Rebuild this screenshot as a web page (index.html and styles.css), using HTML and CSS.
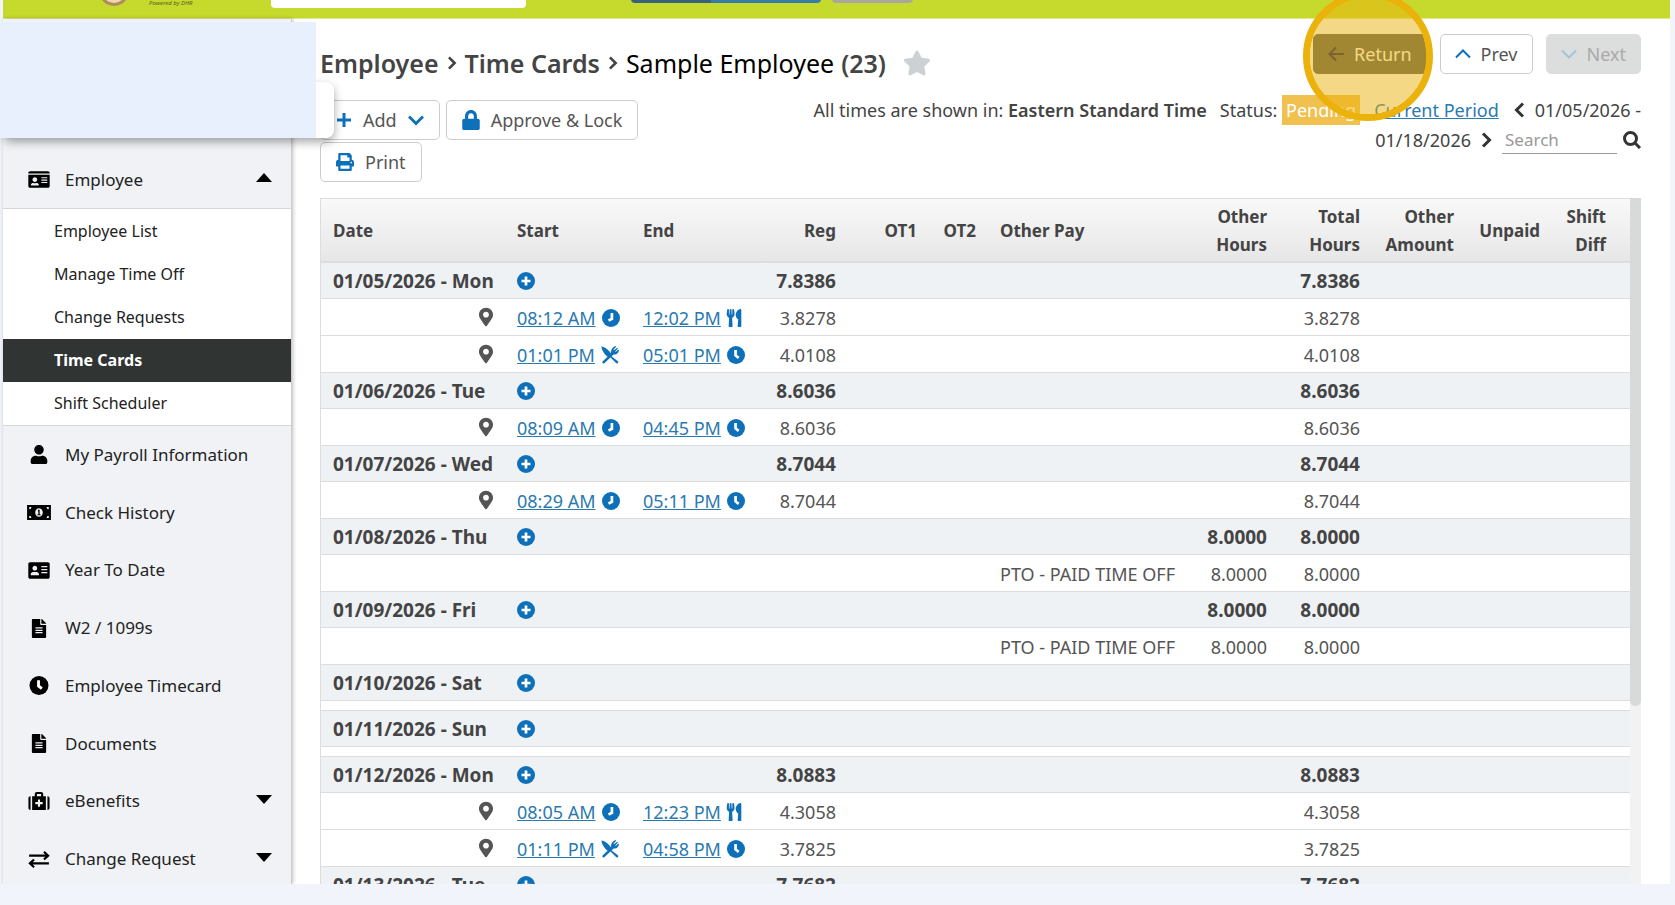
FILE: index.html
```html
<!DOCTYPE html>
<html lang="en">

<head>
  <meta charset="UTF-8">
  <meta name="viewport" content="width=device-width, initial-scale=1.0">
  <title>Time Cards</title>
  <link rel="stylesheet" href="styles.css">
</head>

<body>
  <!-- Icon set -->
  <svg class="sprite" aria-hidden="true">
    <symbol id="i-idcard" viewBox="0 0 576 512"><path d="M528 32H48C21.500 32 0 53.500 0 80v16h576V80c0-26.500-21.500-48-48-48zM0 432c0 26.500 21.500 48 48 48h480c26.500 0 48-21.500 48-48V128H0v304zm352-232c0-4 4-8 8-8h144c4 0 8 4 8 8v16c0 4-4 8-8 8H360c-4 0-8-4-8-8v-16zm0 64c0-4 4-8 8-8h144c4 0 8 4 8 8v16c0 4-4 8-8 8H360c-4 0-8-4-8-8v-16zm0 64c0-4 4-8 8-8h144c4 0 8 4 8 8v16c0 4-4 8-8 8H360c-4 0-8-4-8-8v-16zM176 192c35 0 64 29 64 64s-29 64-64 64-64-29-64-64 29-64 64-64zM67 396C75 370 100 352 128 352h8c12 5 26 8 40 8s28-3 40-8h8c28 0 52 18 61 44 3 10-5 20-16 20H83c-10 0-19-10-16-20z" /></symbol>
    <symbol id="i-card" viewBox="0 0 576 512"><path d="M528 32H48C21 32 0 53 0 80v352c0 27 21 48 48 48h480c27 0 48-21 48-48V80c0-27-21-48-48-48zM352 136h160v32H352zm0 80h160v32H352zm0 80h160v32H352zM176 128c35 0 64 29 64 64s-29 64-64 64-64-29-64-64 29-64 64-64zM64 362c0-37 30-66 66-66h92c36 0 66 29 66 66v22H64z" /></symbol>
    <symbol id="i-user" viewBox="0 0 448 512"><path d="M224 256c71 0 128-57 128-128S295 0 224 0 96 57 96 128s57 128 128 128zm90 32h-17c-22 10-47 16-73 16s-51-6-73-16h-17C60 288 0 348 0 422V464c0 27 21 48 48 48h352c27 0 48-21 48-48v-42c0-74-60-134-134-134z" /></symbol>
    <symbol id="i-money" viewBox="0 0 24 16"><path fill-rule="evenodd" d="M1 1h22v14H1zM3 3v2a2 2 0 0 0 2-2zm18 0h-2a2 2 0 0 0 2 2zM3 13h2a2 2 0 0 0-2-2zm18 0v-2a2 2 0 0 0-2 2zM12 4c-2 0-3.500 1.700-3.500 4S10 12 12 12s3.500-1.700 3.500-4S14 4 12 4zM11 5.500h1.600V9.500h.8v1h-2.800v-1h.8v-2.700H11z" /></symbol>
    <symbol id="i-file" viewBox="0 0 384 512"><path d="M224 136V0H24C11 0 0 11 0 24v464c0 13 11 24 24 24h336c13 0 24-11 24-24V160H248c-13 0-24-11-24-24zm64 248H96v-32h192zm0-64H96v-32h192zm0-64H96v-32h192zM384 122v6H256V0h6c6 0 13 2 17 7l98 98c4 4 7 11 7 17z" /></symbol>
    <symbol id="i-clock" viewBox="0 0 20 20"><circle cx="10" cy="10" r="10" /><path class="cut" d="M9.500 4.500V10.500L13 13.200" /></symbol>
    <symbol id="i-clock-in" viewBox="0 0 20 20"><circle cx="10" cy="10" r="10" /><path class="cut" d="M11 4.500V11L7.200 12.800" /></symbol>
    <symbol id="i-medkit" viewBox="0 0 20 18"><path fill-rule="evenodd" d="M2 4v13C.7 17 0 16.300 0 15V6c0-1.300.7-2 2-2zM18 4v13c1.300 0 2-.7 2-2V6c0-1.300-.7-2-2-2zM3.500 4H6V2c0-1.200.8-2 2-2h4c1.200 0 2 .8 2 2v2h2.500v13h-13zM8 2v2h4V2zM9 7v2.500H6.500v2H9V14h2v-2.500h2.500v-2H11V7z" /></symbol>
    <symbol id="i-swap" viewBox="0 0 20 16"><path class="line" d="M1 4.500h17M14.500 1l3.800 3.500-3.800 3.500M19 11.500H2M5.500 8L1.700 11.500 5.500 15" /></symbol>
    <symbol id="i-plus" viewBox="0 0 16 16"><path class="line" d="M8 1v14M1 8h14" /></symbol>
    <symbol id="i-left" viewBox="0 0 10 16"><path class="line" d="M8.500 1.500L2 8l6.500 6.500" /></symbol>
    <symbol id="i-right" viewBox="0 0 10 16"><path class="line" d="M1.500 1.500L8 8l-6.500 6.500" /></symbol>
    <symbol id="i-down" viewBox="0 0 16 10"><path class="line" d="M1 1.500L8 8.500l7-7" /></symbol>
    <symbol id="i-up" viewBox="0 0 16 10"><path class="line" d="M1 8.500L8 1.500l7 7" /></symbol>
    <symbol id="i-back" viewBox="0 0 16 16"><path class="line" d="M16 8H1.500M8 1.500L1.500 8 8 14.500" /></symbol>
    <symbol id="i-lock" viewBox="0 0 448 512"><path d="M400 224h-24v-72C376 68 308 0 224 0S72 68 72 152v72H48c-27 0-48 21-48 48v192c0 27 21 48 48 48h352c27 0 48-21 48-48V272c0-27-21-48-48-48zm-104 0H152v-72c0-40 32-72 72-72s72 32 72 72v72z" /></symbol>
    <symbol id="i-print" viewBox="0 0 512 512"><path d="M448 192V77c0-8-3-16-9-22L393 9c-6-6-14-9-22-9H96C78 0 64 14 64 32v160c-35 0-64 29-64 64v112c0 9 7 16 16 16h48v96c0 18 14 32 32 32h320c18 0 32-14 32-32v-96h48c9 0 16-7 16-16V256c0-35-29-64-64-64zm-64 256H128v-96h256v96zm0-224H128V64h192v48c0 9 7 16 16 16h48v96zm48 72c-13 0-24-11-24-24s11-24 24-24 24 11 24 24-11 24-24 24z" /></symbol>
    <symbol id="i-star" viewBox="0 0 576 512"><path d="M259 18L194 150 48 171c-26 4-37 36-18 55l106 103-25 145c-4 27 23 46 46 34l131-68 131 68c23 12 51-7 46-34l-25-145 106-103c19-19 8-51-18-55L382 150 317 18c-12-24-46-24-58 0z" /></symbol>
    <symbol id="i-search" viewBox="0 0 18 18"><circle class="line" cx="7.500" cy="7.500" r="6" /><path class="line" d="M12 12l5 5" /></symbol>
    <symbol id="i-add" viewBox="0 0 20 20"><circle cx="10" cy="10" r="10" /><path class="cut" d="M10 5v10M5 10h10" /></symbol>
    <symbol id="i-pin" viewBox="0 0 384 512"><path d="M172 502C27 291 0 269 0 192 0 86 86 0 192 0s192 86 192 192c0 77-27 99-172 310-10 13-30 13-40 0zM192 272c44 0 80-36 80-80s-36-80-80-80-80 36-80 80 36 80 80 80z" /></symbol>
    <symbol id="i-meal" viewBox="0 0 416 512"><path d="M208 15c1 5 16 95 16 129 0 52-28 90-69 105L168 487c1 13-10 25-24 25H80c-14 0-25-11-24-25l13-238C28 234 0 196 0 144 0 110 15 20 16 15 19-5 61-5 64 16v142c1 3 15 3 16 0 1-26 8-140 8-142 3-21 45-21 48 0 0 2 7 116 8 142 1 3 15 3 16 0V16c3-21 45-21 48-1zm119 286l-15 185c-1 14 10 26 24 26h56c13 0 24-11 24-24V24c0-13-11-24-24-24-82 0-221 178-65 301z" /></symbol>
    <symbol id="i-meal-end" viewBox="0 0 20 20"><path d="M.5.5C4 .5 9.500 5 11.800 9.200L10.500 10.500l8.200 6.500c1.500 1.500-.5 3.500-2 2L9.500 11.800 7.500 12C4 9.500.5 4 .5.500z" /><path d="M16 0l.8.8-3 3.400.6.6L18 2l.8.8-3 3.400.6.600L19.200 4l.8.800c-.5 3.200-2.500 5.200-6 4.700L4 19c-1.500 1.500-3.500-.5-2-2L11.200 8c-.5-4 1.800-7 4.800-8z" /></symbol>
  </svg>

  <div class="app">
    <header class="topbar">
      <div class="brand">
        <span class="brand-mark"></span>
        <span class="brand-text">Powered by DHR</span>
      </div>
      <input class="topbar-search" type="text" aria-label="Search everything">
      <div class="topbar-tabs">
        <span class="tab tab-blue"></span>
        <span class="tab tab-gray"></span>
      </div>
    </header>

    <div class="layout">
      <aside class="sidebar">
        <button class="nav-item nav-open" type="button">
          <svg class="nav-icon"><use href="#i-idcard" /></svg>
          <span>Employee</span>
          <span class="caret caret-up"></span>
        </button>
        <nav class="submenu" aria-label="Employee">
          <a href="#">Employee List</a>
          <a href="#">Manage Time Off</a>
          <a href="#">Change Requests</a>
          <a href="#" class="active">Time Cards</a>
          <a href="#">Shift Scheduler</a>
        </nav>
        <nav class="menu" aria-label="Main">
          <a class="nav-item" href="#"><svg class="nav-icon"><use href="#i-user" /></svg><span>My Payroll Information</span></a>
          <a class="nav-item" href="#"><svg class="nav-icon nav-icon-wide"><use href="#i-money" /></svg><span>Check History</span></a>
          <a class="nav-item" href="#"><svg class="nav-icon"><use href="#i-card" /></svg><span>Year To Date</span></a>
          <a class="nav-item" href="#"><svg class="nav-icon"><use href="#i-file" /></svg><span>W2 / 1099s</span></a>
          <a class="nav-item" href="#"><svg class="nav-icon"><use href="#i-clock" /></svg><span>Employee Timecard</span></a>
          <a class="nav-item" href="#"><svg class="nav-icon"><use href="#i-file" /></svg><span>Documents</span></a>
          <button class="nav-item" type="button"><svg class="nav-icon"><use href="#i-medkit" /></svg><span>eBenefits</span><span class="caret caret-down"></span></button>
          <button class="nav-item" type="button"><svg class="nav-icon"><use href="#i-swap" /></svg><span>Change Request</span><span class="caret caret-down"></span></button>
        </nav>
      </aside>

      <main class="content">
        <div class="title-row">
          <h1 class="title">
            <span>Employee</span>
            <svg class="crumb"><use href="#i-right" /></svg>
            <span>Time Cards</span>
            <svg class="crumb"><use href="#i-right" /></svg>
            <span class="name">Sample Employee</span>
            <span>(23)</span>
            <svg class="star"><use href="#i-star" /></svg>
          </h1>
          <div class="pager">
            <button class="btn btn-return" type="button"><svg class="btn-icon"><use href="#i-back" /></svg>Return</button>
            <button class="btn" type="button"><svg class="btn-icon"><use href="#i-up" /></svg>Prev</button>
            <button class="btn" type="button" disabled><svg class="btn-icon"><use href="#i-down" /></svg>Next</button>
            <span class="spotlight"></span>
          </div>
        </div>

        <div class="toolbar">
          <div class="actions">
            <button class="btn" type="button"><svg class="btn-icon bold"><use href="#i-plus" /></svg>Add<svg class="btn-icon bold"><use href="#i-down" /></svg></button>
            <button class="btn" type="button"><svg class="btn-icon solid"><use href="#i-lock" /></svg>Approve &amp; Lock</button>
            <button class="btn" type="button"><svg class="btn-icon solid"><use href="#i-print" /></svg>Print</button>
          </div>
          <div class="status">
            <div class="status-line">
              <span>All times are shown in: <b>Eastern Standard Time</b></span>
              <span class="state">Status: <span class="pending">Pending</span></span>
              <a class="period" href="#">&nbsp; &nbsp;Current Period</a>
              <button class="arrow" type="button" aria-label="Previous period"><svg><use href="#i-left" /></svg></button>
              <span>01/05/2026 -</span>
            </div>
            <div class="status-line">
              <span>01/18/2026</span>
              <button class="arrow" type="button" aria-label="Next period"><svg><use href="#i-right" /></svg></button>
              <input class="search" type="text" placeholder="Search" aria-label="Search">
              <button class="arrow find" type="button" aria-label="Find"><svg><use href="#i-search" /></svg></button>
            </div>
          </div>
        </div>

        <div class="grid-wrap">
          <table class="timecard">
            <colgroup>
              <col class="c-date"><col class="c-start"><col class="c-end"><col class="c-reg"><col class="c-ot1"><col class="c-ot2">
              <col><col class="c-oh"><col class="c-total"><col class="c-amount"><col class="c-unpaid"><col class="c-shift">
            </colgroup>
            <thead>
              <tr>
                <th class="l">Date</th><th class="l">Start</th><th class="l">End</th><th>Reg</th><th>OT1</th><th>OT2</th>
                <th class="l">Other Pay</th><th>Other Hours</th><th>Total Hours</th><th>Other Amount</th><th>Unpaid</th><th>Shift Diff</th>
              </tr>
            </thead>
            <tbody>
              <tr class="day"><td class="l">01/05/2026 - Mon</td><td class="l"><svg class="dot"><use href="#i-add" /></svg></td><td></td><td>7.8386</td><td></td><td></td><td></td><td></td><td>7.8386</td><td></td><td></td><td></td></tr>
              <tr><td><svg class="pin"><use href="#i-pin" /></svg></td><td class="l"><a href="#">08:12 AM</a><svg class="punch"><use href="#i-clock-in" /></svg></td><td class="l"><a href="#">12:02 PM</a><svg class="punch fork"><use href="#i-meal" /></svg></td><td>3.8278</td><td></td><td></td><td></td><td></td><td>3.8278</td><td></td><td></td><td></td></tr>
              <tr><td><svg class="pin"><use href="#i-pin" /></svg></td><td class="l"><a href="#">01:01 PM</a><svg class="punch"><use href="#i-meal-end" /></svg></td><td class="l"><a href="#">05:01 PM</a><svg class="punch"><use href="#i-clock" /></svg></td><td>4.0108</td><td></td><td></td><td></td><td></td><td>4.0108</td><td></td><td></td><td></td></tr>

              <tr class="day"><td class="l">01/06/2026 - Tue</td><td class="l"><svg class="dot"><use href="#i-add" /></svg></td><td></td><td>8.6036</td><td></td><td></td><td></td><td></td><td>8.6036</td><td></td><td></td><td></td></tr>
              <tr><td><svg class="pin"><use href="#i-pin" /></svg></td><td class="l"><a href="#">08:09 AM</a><svg class="punch"><use href="#i-clock-in" /></svg></td><td class="l"><a href="#">04:45 PM</a><svg class="punch"><use href="#i-clock" /></svg></td><td>8.6036</td><td></td><td></td><td></td><td></td><td>8.6036</td><td></td><td></td><td></td></tr>

              <tr class="day"><td class="l">01/07/2026 - Wed</td><td class="l"><svg class="dot"><use href="#i-add" /></svg></td><td></td><td>8.7044</td><td></td><td></td><td></td><td></td><td>8.7044</td><td></td><td></td><td></td></tr>
              <tr><td><svg class="pin"><use href="#i-pin" /></svg></td><td class="l"><a href="#">08:29 AM</a><svg class="punch"><use href="#i-clock-in" /></svg></td><td class="l"><a href="#">05:11 PM</a><svg class="punch"><use href="#i-clock" /></svg></td><td>8.7044</td><td></td><td></td><td></td><td></td><td>8.7044</td><td></td><td></td><td></td></tr>

              <tr class="day"><td class="l">01/08/2026 - Thu</td><td class="l"><svg class="dot"><use href="#i-add" /></svg></td><td></td><td></td><td></td><td></td><td></td><td>8.0000</td><td>8.0000</td><td></td><td></td><td></td></tr>
              <tr><td></td><td></td><td></td><td></td><td></td><td></td><td class="l">PTO - PAID TIME OFF</td><td>8.0000</td><td>8.0000</td><td></td><td></td><td></td></tr>

              <tr class="day"><td class="l">01/09/2026 - Fri</td><td class="l"><svg class="dot"><use href="#i-add" /></svg></td><td></td><td></td><td></td><td></td><td></td><td>8.0000</td><td>8.0000</td><td></td><td></td><td></td></tr>
              <tr><td></td><td></td><td></td><td></td><td></td><td></td><td class="l">PTO - PAID TIME OFF</td><td>8.0000</td><td>8.0000</td><td></td><td></td><td></td></tr>

              <tr class="day"><td class="l">01/10/2026 - Sat</td><td class="l"><svg class="dot"><use href="#i-add" /></svg></td><td></td><td></td><td></td><td></td><td></td><td></td><td></td><td></td><td></td><td></td></tr>
              <tr class="empty"><td colspan="12"></td></tr>

              <tr class="day"><td class="l">01/11/2026 - Sun</td><td class="l"><svg class="dot"><use href="#i-add" /></svg></td><td></td><td></td><td></td><td></td><td></td><td></td><td></td><td></td><td></td><td></td></tr>
              <tr class="empty"><td colspan="12"></td></tr>

              <tr class="day"><td class="l">01/12/2026 - Mon</td><td class="l"><svg class="dot"><use href="#i-add" /></svg></td><td></td><td>8.0883</td><td></td><td></td><td></td><td></td><td>8.0883</td><td></td><td></td><td></td></tr>
              <tr><td><svg class="pin"><use href="#i-pin" /></svg></td><td class="l"><a href="#">08:05 AM</a><svg class="punch"><use href="#i-clock-in" /></svg></td><td class="l"><a href="#">12:23 PM</a><svg class="punch fork"><use href="#i-meal" /></svg></td><td>4.3058</td><td></td><td></td><td></td><td></td><td>4.3058</td><td></td><td></td><td></td></tr>
              <tr><td><svg class="pin"><use href="#i-pin" /></svg></td><td class="l"><a href="#">01:11 PM</a><svg class="punch"><use href="#i-meal-end" /></svg></td><td class="l"><a href="#">04:58 PM</a><svg class="punch"><use href="#i-clock" /></svg></td><td>3.7825</td><td></td><td></td><td></td><td></td><td>3.7825</td><td></td><td></td><td></td></tr>

              <tr class="day"><td class="l">01/13/2026 - Tue</td><td class="l"><svg class="dot"><use href="#i-add" /></svg></td><td></td><td>7.7682</td><td></td><td></td><td></td><td></td><td>7.7682</td><td></td><td></td><td></td></tr>
            </tbody>
          </table>
          <div class="scrollbar"><div class="thumb"></div></div>
        </div>
      </main>
    </div>

    <div class="flyout"></div>
    <div class="cover"></div>
  </div>
</body>

</html>
```
FILE: styles.css
```css
* {
  box-sizing: border-box;
}

body {
  margin: 0;
  background: #f1f5fb;
  color: #444;
  font-family: "Noto Sans", sans-serif;
  font-size: 18px;
  line-height: 30px;
}

button,
input {
  font: inherit;
  color: inherit;
}

button {
  cursor: pointer;
}

svg {
  fill: currentColor;
  flex: none;
  stroke-width: 2;
}

.sprite {
  display: none;
}

/* Stroked parts of the icons */
.line {
  fill: none;
  stroke: currentColor;
}

.cut {
  fill: none;
  stroke: #fff;
  stroke-width: 3;
}

.app {
  position: relative;
  display: flex;
  flex-direction: column;
  height: calc(100vh - 21px);
  margin: 0 5px 0 3px;
  background: #fff;
}

/* Top bar, scrolled mostly out of view */
.topbar {
  display: flex;
  flex: none;
  align-items: flex-start;
  height: 19px;
  overflow: hidden;
  background: #c6d92d;
  border-bottom: 1px solid #e0ea8c;
}

.brand {
  display: flex;
  gap: 20px;
  width: 268px;
  padding-left: 96px;
}

.brand-mark {
  width: 30px;
  height: 30px;
  margin-top: -24px;
  background: #ead9b0;
  border: 3px solid #b08a5a;
  border-radius: 50%;
}

.brand-text {
  margin-top: -2px;
  color: #5a5a20;
  font-size: 6px;
  font-style: italic;
  line-height: 10px;
}

.topbar-search {
  width: 255px;
  height: 28px;
  margin-top: -20px;
  background: #fff;
  border: 0;
  border-radius: 4px;
}

.topbar-tabs {
  display: flex;
  gap: 11px;
  margin-left: 105px;
}

.tab {
  height: 24px;
  margin-top: -21px;
  border-radius: 4px;
}

.tab-blue {
  width: 190px;
  background: linear-gradient(to right, #38617f 42%, #347da8 42%);
}

.tab-gray {
  width: 81px;
  background: #aaa6a0;
}

.layout {
  display: flex;
  flex: 1;
  min-height: 0;
}

/* Sidebar */
.sidebar {
  flex: none;
  width: 289px;
  padding-top: 132px;
  overflow: hidden;
  background: #f0f2f5;
  border-right: 1px solid #ccc;
  box-shadow: 1px 0 4px rgba(0, 0, 0, 0.25);
  color: #222;
  font-size: 17px;
}

.nav-item {
  display: flex;
  align-items: center;
  width: 100%;
  padding: 0 19px 0 25px;
  background: none;
  border: 0;
  color: inherit;
  text-align: left;
  text-decoration: none;
}

.nav-open {
  height: 58px;
  border-bottom: 1px solid #d8d8d8;
}

.nav-icon {
  width: 22px;
  height: 19px;
  margin-right: 15px;
  color: #000;
}

.nav-icon-wide {
  width: 26px;
  margin-left: -2px;
  margin-right: 13px;
}

.caret {
  margin-left: auto;
  margin-bottom: 4px;
  border: 8px solid transparent;
}

.caret-up {
  border-top: 0;
  border-bottom: 9px solid #000;
}

.caret-down {
  border-bottom: 0;
  border-top: 9px solid #000;
}

.submenu {
  padding-top: 1px;
  background: #fff;
  border-bottom: 1px solid #d8d8d8;
  font-size: 16px;
}

.submenu a {
  display: block;
  padding-left: 51px;
  color: inherit;
  line-height: 43px;
  text-decoration: none;
}

.submenu .active {
  background: #303433;
  color: #fff;
  font-weight: 700;
}

.menu {
  display: grid;
  grid-template-rows: repeat(8, 1fr);
  height: 462px;
}

/* Panels lying over the page */
.flyout {
  position: absolute;
  top: 82px;
  left: 0;
  width: 331px;
  height: 56px;
  background: #fff;
  border-radius: 8px;
  box-shadow: 0 4px 10px rgba(0, 0, 0, 0.35);
}

.cover {
  position: absolute;
  top: 22px;
  left: -3px;
  width: 316px;
  height: 116px;
  background: #e8effd;
}

/* Main area */
.content {
  display: flex;
  flex: 1;
  flex-direction: column;
  min-width: 0;
  padding: 15px 29px 0 28px;
}

.title-row {
  display: flex;
  align-items: flex-start;
  justify-content: space-between;
}

.title {
  display: flex;
  align-items: center;
  gap: 7px;
  margin: 0;
  padding-top: 14px;
  font-size: 25px;
  font-weight: 600;
  line-height: 30px;
  white-space: nowrap;
}

.title .name {
  color: #000;
  font-weight: 400;
}

.crumb {
  width: 12px;
  height: 14px;
}

.crumb,
.arrow svg,
.btn-icon.bold {
  stroke-width: 3;
}

.star {
  width: 28px;
  height: 28px;
  margin-left: 10px;
  color: #ccd1d3;
}

.pager {
  position: relative;
  display: flex;
  gap: 13px;
}

.btn {
  display: flex;
  align-items: center;
  gap: 11px;
  height: 40px;
  padding: 0 15px;
  background: #fff;
  border: 1px solid #ccc;
  border-radius: 5px;
  color: #555;
  white-space: nowrap;
}

.pager .btn {
  gap: 10px;
  padding: 0 14px;
}

.btn-icon {
  width: 16px;
  height: 16px;
  color: #0d70b8;
}

.btn-icon.solid {
  width: 18px;
  height: 20px;
}

.btn-return {
  background: #595c59;
  border-color: #595c59;
  color: #fff;
}

.btn-return .btn-icon {
  color: #101058;
}

.btn:disabled {
  background: #dcdddd;
  border-color: #dcdddd;
  color: #aaa;
}

.btn:disabled .btn-icon {
  color: #9fc4de;
}

.spotlight {
  position: absolute;
  top: -43px;
  left: -10px;
  width: 130px;
  height: 130px;
  background: rgba(235, 178, 11, 0.5);
  border: 7px solid #ebb20b;
  border-radius: 50%;
  background-clip: padding-box;
}

.toolbar {
  display: flex;
  justify-content: space-between;
  margin-top: 17px;
}

.actions {
  display: flex;
  flex-wrap: wrap;
  align-content: flex-start;
  gap: 2px 6px;
  width: 400px;
  padding-top: 5px;
}

.status-line {
  display: flex;
  align-items: center;
  justify-content: flex-end;
  white-space: nowrap;
}

.status-line b {
  font-weight: 600;
}

.state {
  margin-left: 13px;
}

.pending {
  display: inline-block;
  padding: 0 4px;
  background: #f0c14f;
  color: #fff;
}

a {
  color: #2a7aaf;
}

.period {
  margin-right: 5px;
}

.arrow {
  display: flex;
  margin: 0 10px;
  padding: 0;
  background: none;
  border: 0;
  color: #333;
}

.arrow svg {
  width: 11px;
  height: 16px;
}

.search {
  width: 115px;
  height: 28px;
  padding: 0 3px;
  background: none;
  border: 0;
  border-bottom: 1px solid #999;
  font-size: 17px;
}

.search::placeholder {
  color: #999;
}

.arrow.find {
  margin: 0 0 0 6px;
}

.find svg {
  width: 18px;
  height: 18px;
}

/* Time card grid */
.grid-wrap {
  display: flex;
  flex: 1;
  align-items: flex-start;
  min-height: 0;
  margin-top: 16px;
  overflow: hidden;
}

.timecard {
  flex: 1;
  table-layout: fixed;
  width: 100%;
  border-spacing: 0;
  border-left: 1px solid #ddd;
}

.c-date { width: 184px; }
.c-start { width: 126px; }
.c-end { width: 119px; }
.c-reg { width: 98px; }
.c-ot1 { width: 81px; }
.c-ot2 { width: 59px; }
.c-oh { width: 89px; }
.c-total { width: 93px; }
.c-amount { width: 94px; }
.c-unpaid { width: 86px; }
.c-shift { width: 78px; }

.timecard thead tr {
  background: linear-gradient(#f9f9f9, #e6e6e6);
}

.timecard th {
  height: 65px;
  padding: 2px 12px 0 0;
  border-top: 1px solid #ddd;
  border-bottom: 2px solid #ddd;
  font-size: 17px;
  font-weight: 700;
  line-height: 28px;
  text-align: right;
}

.timecard td {
  height: 37px;
  padding: 1px 12px 0;
  border-bottom: 1px solid #ddd;
  color: #555;
  line-height: 30px;
  text-align: right;
  white-space: nowrap;
}

.timecard .l {
  padding-left: 12px;
  padding-right: 0;
  text-align: left;
}

.timecard th:last-child,
.timecard td:last-child {
  padding-right: 24px;
}

.timecard .day td {
  height: 36px;
  background: #eff2f5;
  color: #444;
  font-size: 19px;
  font-weight: 700;
}

.timecard .empty td {
  height: 10px;
}

.timecard svg {
  display: inline-block;
  vertical-align: -2px;
}

.dot,
.punch {
  width: 18px;
  height: 18px;
  color: #0d70b8;
}

.punch {
  margin-left: 6px;
}

.timecard .fork {
  margin-left: 4px;
}

.timecard .pin {
  width: 14px;
  height: 20px;
}

.scrollbar {
  align-self: stretch;
  width: 11px;
  background: #f2f2f2;
}

.thumb {
  height: 74%;
  background: #d8dada;
  border-radius: 0 0 6px 6px;
}
```
